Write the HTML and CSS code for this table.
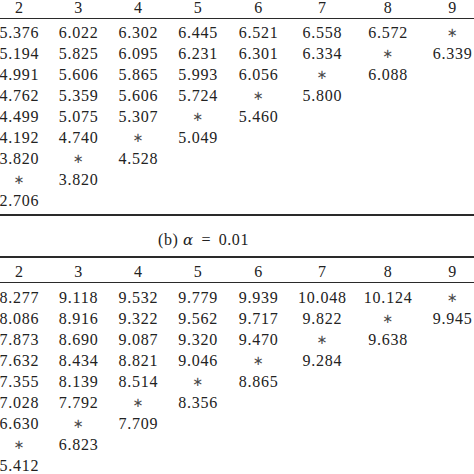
FILE: index.html
```html
<!DOCTYPE html>
<html>
<head>
<meta charset="utf-8">
<link rel="stylesheet" href="styles.css">
</head>
<body>
<div class="page">
  <section class="tbl tbl-a">
    <div class="row head"><span>2</span><span>3</span><span>4</span><span>5</span><span>6</span><span>7</span><span>8</span><span>9</span></div>
    <div class="rule mid"></div>
    <div class="body">
      <div class="row"><span>5.376</span><span>6.022</span><span>6.302</span><span>6.445</span><span>6.521</span><span>6.558</span><span>6.572</span><span class="ast">∗</span></div>
      <div class="row"><span>5.194</span><span>5.825</span><span>6.095</span><span>6.231</span><span>6.301</span><span>6.334</span><span class="ast">∗</span><span>6.339</span></div>
      <div class="row"><span>4.991</span><span>5.606</span><span>5.865</span><span>5.993</span><span>6.056</span><span class="ast">∗</span><span>6.088</span></div>
      <div class="row"><span>4.762</span><span>5.359</span><span>5.606</span><span>5.724</span><span class="ast">∗</span><span>5.800</span></div>
      <div class="row"><span>4.499</span><span>5.075</span><span>5.307</span><span class="ast">∗</span><span>5.460</span></div>
      <div class="row"><span>4.192</span><span>4.740</span><span class="ast">∗</span><span>5.049</span></div>
      <div class="row"><span>3.820</span><span class="ast">∗</span><span>4.528</span></div>
      <div class="row"><span class="ast">∗</span><span>3.820</span></div>
      <div class="row"><span>2.706</span></div>
    </div>
    <div class="rule thick"></div>
  </section>

  <div class="caption">(b) <i class="alpha">α</i> <span class="eq">=</span> 0.01</div>

  <section class="tbl tbl-b">
    <div class="rule thick"></div>
    <div class="row head"><span>2</span><span>3</span><span>4</span><span>5</span><span>6</span><span>7</span><span>8</span><span>9</span></div>
    <div class="rule mid"></div>
    <div class="body">
      <div class="row"><span>8.277</span><span>9.118</span><span>9.532</span><span>9.779</span><span>9.939</span><span>10.048</span><span>10.124</span><span class="ast">∗</span></div>
      <div class="row"><span>8.086</span><span>8.916</span><span>9.322</span><span>9.562</span><span>9.717</span><span>9.822</span><span class="ast">∗</span><span>9.945</span></div>
      <div class="row"><span>7.873</span><span>8.690</span><span>9.087</span><span>9.320</span><span>9.470</span><span class="ast">∗</span><span>9.638</span></div>
      <div class="row"><span>7.632</span><span>8.434</span><span>8.821</span><span>9.046</span><span class="ast">∗</span><span>9.284</span></div>
      <div class="row"><span>7.355</span><span>8.139</span><span>8.514</span><span class="ast">∗</span><span>8.865</span></div>
      <div class="row"><span>7.028</span><span>7.792</span><span class="ast">∗</span><span>8.356</span></div>
      <div class="row"><span>6.630</span><span class="ast">∗</span><span>7.709</span></div>
      <div class="row"><span class="ast">∗</span><span>6.823</span></div>
      <div class="row"><span>5.412</span></div>
    </div>
  </section>
</div>
</body>
</html>
```

FILE: styles.css
```css
html, body {
  margin: 0;
  padding: 0;
  background: #ffffff;
  overflow: hidden;
}

body {
  width: 474px;
  height: 474px;
  font-family: "Liberation Serif", "DejaVu Serif", serif;
  font-size: 16px;
  color: #222222;
}

.page {
  margin-top: -2px;
}

.row {
  display: grid;
  grid-template-columns: 59px 59.5px 60px 59.5px 61.5px 66px 65.5px 63.5px;
  margin-left: -10.5px;
  height: 21px;
  line-height: 21px;
}

.row span {
  text-align: center;
  white-space: nowrap;
  letter-spacing: 0.8px;
  padding-left: 0.8px;
}

.row.head {
  height: 20px;
  line-height: 20px;
}

.tbl-b .row.head {
  margin-top: 4px;
}

.row span.ast {
  font-family: "DejaVu Sans", sans-serif;
  font-size: 13px;
  color: #4a4a4a;
  letter-spacing: 0;
  padding-left: 0;
}

.rule {
  width: 100%;
  background: #2a2a2a;
}

.rule.mid {
  height: 1px;
}

.rule.thick {
  height: 2px;
}

.body {
  padding-top: 3px;
  padding-bottom: 3px;
}

.tbl-b .body {
  padding-top: 4px;
}

.caption {
  padding-left: 158px;
  padding-top: 14px;
  padding-bottom: 6px;
  line-height: 20px;
  letter-spacing: 0.6px;
}

.alpha {
  font-family: "DejaVu Serif", serif;
  font-size: 15px;
  font-style: italic;
}

.eq {
  margin: 0 3px;
}
```
